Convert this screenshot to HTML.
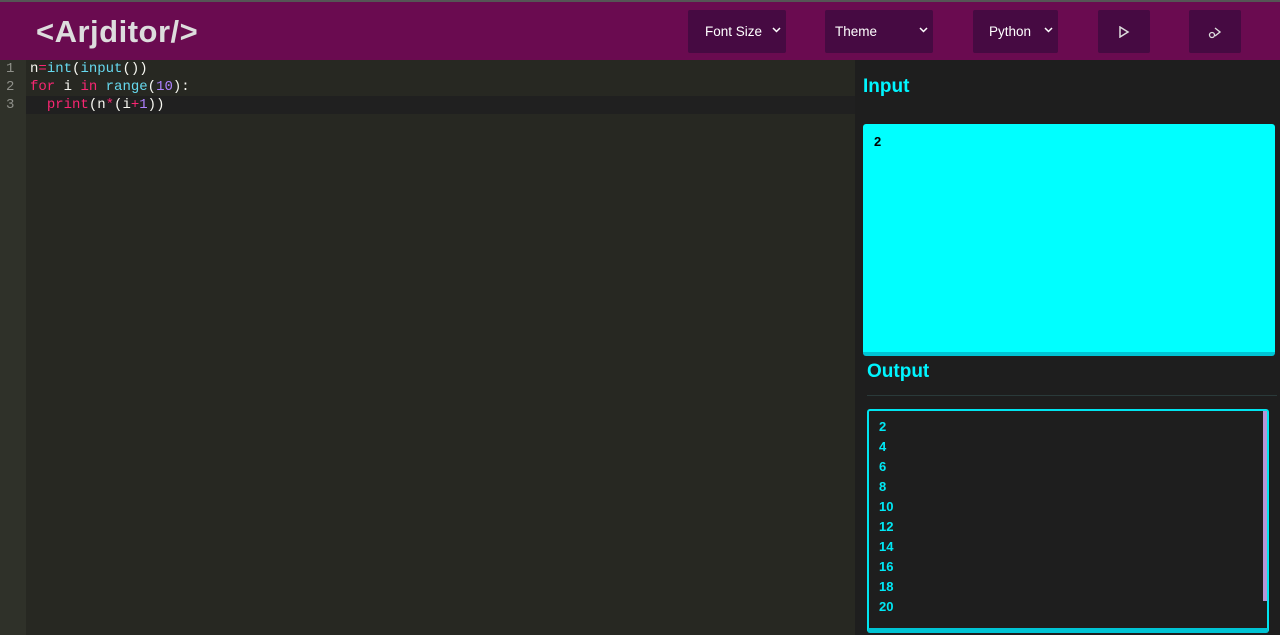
<!DOCTYPE html>
<html><head><style>
*{margin:0;padding:0;box-sizing:border-box}
body{width:1280px;height:635px;overflow:hidden;background:#1e1e1e;font-family:"Liberation Sans",sans-serif;position:relative}
.hdr{position:absolute;left:0;top:0;width:1280px;height:60px;background:#6a0b50;border-top:2px solid #555}
.logo{position:absolute;left:36px;top:12px;color:#ddd;font-size:31px;font-weight:bold;letter-spacing:0.5px}
.btn{position:absolute;top:8px;height:43px;background:#460a42;color:#fff;font-size:13.5px;line-height:43px;border-radius:2px}
.btn .c{position:absolute;right:5px;top:17px;width:9px;height:6px}
.ed{position:absolute;left:0;top:60px;width:855px;height:575px;background:#272822}
.gut{position:absolute;left:0;top:0;width:26px;height:575px;background:#2f3129}
.act{position:absolute;left:26px;top:36px;width:829px;height:18px;background:#202020}
.ln{position:absolute;left:0;font-family:"Liberation Mono",monospace;font-size:14px;line-height:19px;height:19px}
.num{color:#8f908a;left:6px}
.code{left:30px;color:#f8f8f2}
.k{color:#f92672}.b{color:#66d9ef}.n{color:#ae81ff}
h2{position:absolute;color:#00f5ff;font-size:19px;font-weight:bold}
.inp{position:absolute;left:863px;top:124px;width:412px;height:232px;background:#00ffff;border-radius:3px;border-bottom:4px solid #00c4d4;padding:10px 11px;font-weight:bold;font-size:13px;color:#000}
.hr{position:absolute;left:867px;top:395px;width:410px;height:1px;background:#2a3a3a}
.out{position:absolute;left:867px;top:409px;width:402px;height:224px;border:2px solid #00e5f0;border-bottom:5px solid #00c4d4;border-radius:3px;padding:6px 10px;color:#00e8f5;font-weight:bold;font-size:13px;line-height:20px}
.sb{position:absolute;right:0;top:0;width:4px;height:190px;background:#b595d8}
</style></head><body>
<div class="hdr">
<div class="logo">&lt;Arjditor/&gt;</div>
<div class="btn" style="left:688px;width:98px;padding-left:17px">Font Size<svg class="c" viewBox="0 0 9 6"><path d="M1 1L4.5 4.5L8 1" stroke="#fff" stroke-width="1.5" fill="none"/></svg></div>
<div class="btn" style="left:825px;width:108px;padding-left:10px">Theme<svg class="c" viewBox="0 0 9 6"><path d="M1 1L4.5 4.5L8 1" stroke="#fff" stroke-width="1.5" fill="none"/></svg></div>
<div class="btn" style="left:973px;width:85px;padding-left:16px">Python<svg class="c" viewBox="0 0 9 6"><path d="M1 1L4.5 4.5L8 1" stroke="#fff" stroke-width="1.5" fill="none"/></svg></div>
<div class="btn" style="left:1098px;width:52px"><svg style="position:absolute;left:20px;top:16px" width="12" height="12" viewBox="0 0 12 12"><path d="M2 1L10 6L2 11Z" stroke="#ddd" stroke-width="1.5" fill="none"/></svg></div>
<div class="btn" style="left:1189px;width:52px"><svg style="position:absolute;left:19px;top:16px" width="14" height="13" viewBox="0 0 14 13"><path d="M7 2L12 6L7 10" stroke="#ddd" stroke-width="1.4" fill="none"/><circle cx="4" cy="9" r="2.5" stroke="#ddd" stroke-width="1.3" fill="none"/></svg></div>
</div>
<div class="ed">
<div class="gut"></div>
<div class="act"></div>
<div class="ln num" style="top:0">1</div>
<div class="ln num" style="top:18px">2</div>
<div class="ln num" style="top:36px">3</div>
<div class="ln code" style="top:0">n<span class="k">=</span><span class="b">int</span>(<span class="b">input</span>())</div>
<div class="ln code" style="top:18px"><span class="k">for</span> i <span class="k">in</span> <span class="b">range</span>(<span class="n">10</span>):</div>
<div class="ln code" style="top:36px">&nbsp;&nbsp;<span class="k">print</span>(n<span class="k">*</span>(i<span class="k">+</span><span class="n">1</span>))</div>
</div>
<h2 style="left:863px;top:76px">Input</h2>
<div class="inp">2</div>
<h2 style="left:867px;top:361px">Output</h2>
<div class="hr"></div>
<div class="out"><div class="sb"></div>2<br>4<br>6<br>8<br>10<br>12<br>14<br>16<br>18<br>20</div>
</body></html>
